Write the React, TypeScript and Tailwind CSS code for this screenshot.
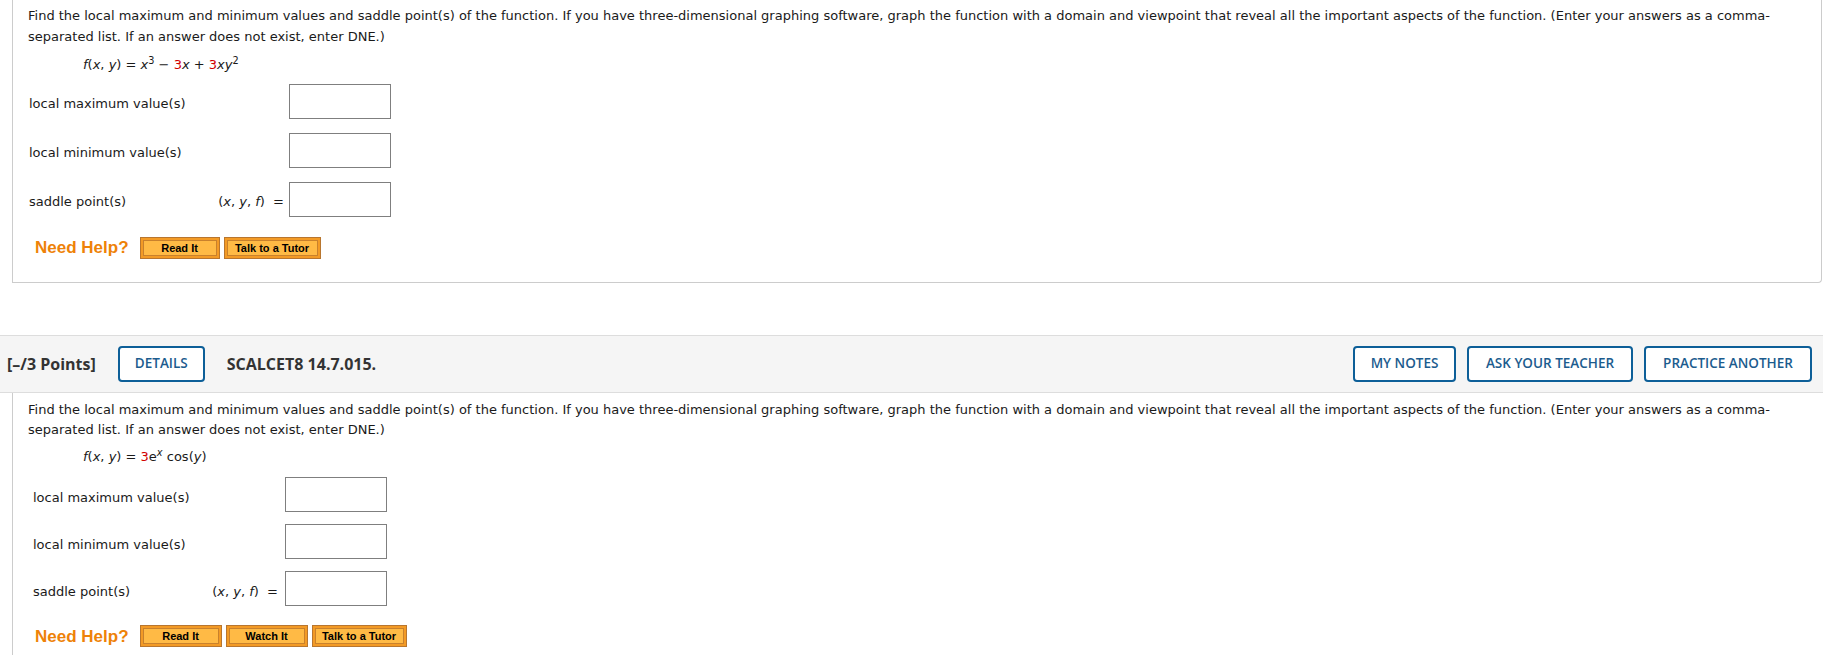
import React from "react";

const verdana = "font-['DejaVu_Sans',Verdana,sans-serif]";
const openSans = "font-['Open_Sans',sans-serif]";
const arial = "font-['Liberation_Sans',Arial,sans-serif]";

function HelpButton({ label }: { label: string }) {
  return (
    <span className="flex h-[22px] items-stretch border border-[#b8762f] bg-[#f39a25] p-[2px]">
      <span
        className={`flex flex-1 items-center justify-center border border-[#c9812c] bg-[#ffba45] text-[11px] font-bold text-black ${arial}`}
      >
        {label}
      </span>
    </span>
  );
}

function AnswerBox() {
  return <div className="h-[35px] w-[102px] border border-[#7f7f7f] bg-white" />;
}

type Row = { label: string; prefix?: React.ReactNode };

const rows: Row[] = [
  { label: "local maximum value(s)" },
  { label: "local minimum value(s)" },
  {
    label: "saddle point(s)",
    prefix: (
      <span>
        (<i>x</i>, <i>y</i>, <i>f</i>)&nbsp; =
      </span>
    ),
  },
];

function Question({
  formula,
  buttons,
  pad,
  leading,
  formulaClass,
  rowsClass,
  leftClass,
  helpClass,
  buttonWidths,
}: {
  formula: React.ReactNode;
  buttons: string[];
  pad: string;
  leading: string;
  formulaClass: string;
  rowsClass: string;
  leftClass: string;
  helpClass: string;
  buttonWidths: string[];
}) {
  return (
    <div className={`text-[13px] text-[#1a1a1a] ${verdana} ${pad}`}>
      <p className={leading}>
        Find the local maximum and minimum values and saddle point(s) of the function. If you have
        three-dimensional graphing software, graph the function with a domain and viewpoint that
        reveal all the important aspects of the function. (Enter your answers as a comma-
        <br />
        separated list. If an answer does not exist, enter DNE.)
      </p>
      <div className={`leading-[21px] ${formulaClass}`}>{formula}</div>
      <div className={`flex flex-col ${rowsClass}`}>
        {rows.map((r) => (
          <div key={r.label} className="flex items-center">
            <div className={`flex items-center justify-between ${leftClass}`}>
              <span>{r.label}</span>
              {r.prefix}
            </div>
            <AnswerBox />
          </div>
        ))}
      </div>
      <div className={`flex items-center ${helpClass}`}>
        <span className={`mr-[11px] text-[17px] font-bold text-[#ee8208] ${arial}`}>
          Need Help?
        </span>
        <div className="flex gap-[4px]">
          {buttons.map((b, i) => (
            <div key={b} className={buttonWidths[i]}>
              <HelpButton label={b} />
            </div>
          ))}
        </div>
      </div>
    </div>
  );
}

function OutlineButton({ label, width }: { label: string; width: string }) {
  return (
    <span
      className={`flex h-[36px] items-center justify-center rounded-[4px] border-2 border-[#0d5f98] bg-white text-[13.5px] font-semibold text-[#1c5c8e] ${width} ${openSans}`}
    >
      {label}
    </span>
  );
}

export default function App() {
  return (
    <div className="min-h-screen bg-white">
      <div className="ml-3 mr-px rounded-br-[4px] border-r border-b border-l border-[#cccccc]">
        <Question
          pad="pl-[15px] pt-[5px] pb-[21px]"
          leading="leading-[21px]"
          formulaClass="mt-[7px] pl-[55px]"
          rowsClass="mt-[9px] gap-[14px]"
          leftClass="w-[261px] pl-[1px] pr-[5px] pt-[5px]"
          helpClass="mt-[18px] pl-[7px]"
          buttons={["Read It", "Talk to a Tutor"]}
          buttonWidths={["w-[80px]", "w-[97px]"]}
          formula={
            <span>
              <i>f</i>(<i>x</i>, <i>y</i>) = <i>x</i>
              <sup>3</sup> − <span className="text-[#d10000]">3</span>
              <i>x</i> + <span className="text-[#d10000]">3</span>
              <i>xy</i>
              <sup>2</sup>
            </span>
          }
        />
      </div>

      <div className="mt-[52px] flex h-[58px] items-center border-y border-[#dddddd] bg-[#f5f5f5] pl-[7px] pr-[11px]">
        <span className={`text-[16px] font-bold text-[#333333] ${openSans}`}>[–/3 Points]</span>
        <span className="ml-[22px]">
          <OutlineButton label="DETAILS" width="w-[87px]" />
        </span>
        <span className={`ml-[22px] text-[16px] font-bold text-[#333333] ${openSans}`}>
          SCALCET8 14.7.015.
        </span>
        <div className="ml-auto flex gap-[11px]">
          <OutlineButton label="MY NOTES" width="w-[103px]" />
          <OutlineButton label="ASK YOUR TEACHER" width="w-[166px]" />
          <OutlineButton label="PRACTICE ANOTHER" width="w-[168px]" />
        </div>
      </div>

      <div className="ml-3 border-l border-[#cccccc]">
        <Question
          pad="pl-[15px] pt-[7px] pb-[8px]"
          leading="leading-[20px]"
          formulaClass="mt-[6px] pl-[55px]"
          rowsClass="mt-[10px] gap-[12px]"
          leftClass="w-[257px] pl-[5px] pr-[7px] pt-[8px]"
          helpClass="mt-[18px] pl-[7px]"
          buttons={["Read It", "Watch It", "Talk to a Tutor"]}
          buttonWidths={["w-[82px]", "w-[82px]", "w-[95px]"]}
          formula={
            <span>
              <i>f</i>(<i>x</i>, <i>y</i>) = <span className="text-[#d10000]">3</span>e
              <sup>
                <i>x</i>
              </sup>{" "}
              cos(<i>y</i>)
            </span>
          }
        />
      </div>
    </div>
  );
}
